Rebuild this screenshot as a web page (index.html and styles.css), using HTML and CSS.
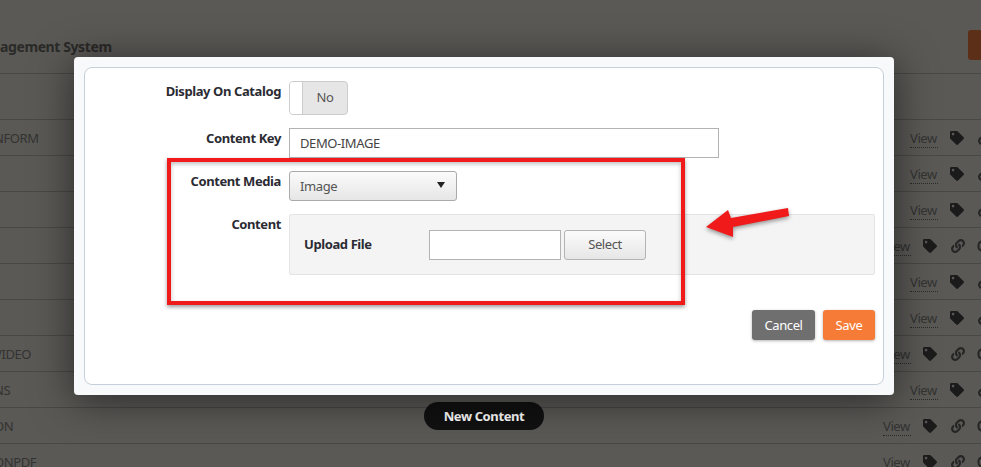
FILE: index.html
```html
<!DOCTYPE html>
<html lang="en">
<head>
  <meta charset="UTF-8">
  <meta name="viewport" content="width=device-width, initial-scale=1.0">
  <title>Content Management System</title>
  <link rel="stylesheet" href="styles.css">
</head>
<body>
  <svg class="icon-defs" width="0" height="0">
    <symbol id="tag" viewBox="0 0 512 512"><path d="M0 252.118V48C0 21.49 21.49 0 48 0h204.118a48 48 0 0 1 33.941 14.059l211.882 211.882c18.745 18.745 18.745 49.137 0 67.882L293.823 497.941c-18.745 18.745-49.137 18.745-67.882 0L14.059 286.059A48 48 0 0 1 0 252.118zM112 64c-26.51 0-48 21.49-48 48s21.49 48 48 48 48-21.49 48-48-21.49-48-48-48z"/></symbol>
    <symbol id="link" viewBox="0 0 512 512"><path d="M326.612 185.391c59.747 59.809 58.927 155.698.36 214.59-.11.12-.24.25-.36.37l-67.2 67.2c-59.27 59.27-155.699 59.262-214.96 0-59.27-59.26-59.27-155.7 0-214.96l37.106-37.106c9.84-9.84 26.786-3.3 27.294 10.606.648 17.722 3.826 35.527 9.69 52.721 1.986 5.822.567 12.262-3.783 16.612l-13.087 13.087c-28.026 28.026-28.905 73.66-1.155 101.96 28.024 28.579 74.086 28.749 102.325.51l67.2-67.19c28.191-28.191 28.073-73.757 0-101.83-3.701-3.694-7.429-6.564-10.341-8.569a16.037 16.037 0 0 1-6.947-12.606c-.396-10.567 3.348-21.456 11.698-29.806l21.054-21.055c5.521-5.521 14.182-6.199 20.584-1.731a152.482 152.482 0 0 1 20.522 17.197zM467.547 44.449c-59.261-59.262-155.69-59.27-214.96 0l-67.2 67.2c-.12.12-.25.25-.36.37-58.566 58.892-59.387 154.781.36 214.59a152.454 152.454 0 0 0 20.521 17.196c6.402 4.468 15.064 3.789 20.584-1.731l21.054-21.055c8.35-8.35 12.094-19.239 11.698-29.806a16.037 16.037 0 0 0-6.947-12.606c-2.912-2.005-6.64-4.875-10.341-8.569-28.073-28.073-28.191-73.639 0-101.83l67.2-67.19c28.239-28.239 74.3-28.069 102.325.51 27.75 28.3 26.872 73.934-1.155 101.96l-13.087 13.087c-4.35 4.35-5.769 10.79-3.783 16.612 5.864 17.194 9.042 34.999 9.69 52.721.509 13.906 17.454 20.446 27.294 10.606l37.106-37.106c59.271-59.259 59.271-155.699.001-214.959z"/></symbol>
    <symbol id="arc" viewBox="0 0 14 14"><path d="M6 2.2A5 5 0 0 0 6 11.8" fill="none" stroke="currentColor" stroke-width="2"/></symbol>
  </svg>

  <!-- Page behind the dialog -->
  <div class="page">
    <div class="page-head">
      <h1>agement System</h1>
      <span class="head-btn"></span>
    </div>
    <div class="table-head"></div>

    <div class="row"><span class="name">NFORM</span><div class="actions"><a>View</a><svg class="tag"><use href="#tag"/></svg><svg class="link"><use href="#link"/></svg></div></div>
    <div class="row"><span class="name"></span><div class="actions"><a>View</a><svg class="tag"><use href="#tag"/></svg><svg class="link"><use href="#link"/></svg></div></div>
    <div class="row"><span class="name"></span><div class="actions"><a>View</a><svg class="tag"><use href="#tag"/></svg><svg class="link"><use href="#link"/></svg></div></div>
    <div class="row"><span class="name"></span><div class="actions wide"><a>View</a><svg class="tag"><use href="#tag"/></svg><svg class="link"><use href="#link"/></svg><svg class="arc"><use href="#arc"/></svg></div></div>
    <div class="row"><span class="name"></span><div class="actions"><a>View</a><svg class="tag"><use href="#tag"/></svg><svg class="link"><use href="#link"/></svg></div></div>
    <div class="row"><span class="name"></span><div class="actions"><a>View</a><svg class="tag"><use href="#tag"/></svg><svg class="link"><use href="#link"/></svg></div></div>
    <div class="row"><span class="name">VIDEO</span><div class="actions wide"><a>View</a><svg class="tag"><use href="#tag"/></svg><svg class="link"><use href="#link"/></svg><svg class="arc"><use href="#arc"/></svg></div></div>
    <div class="row"><span class="name">NS</span><div class="actions"><a>View</a><svg class="tag"><use href="#tag"/></svg><svg class="link"><use href="#link"/></svg></div></div>
    <div class="row"><span class="name">ON</span><div class="actions wide"><a>View</a><svg class="tag"><use href="#tag"/></svg><svg class="link"><use href="#link"/></svg><svg class="arc"><use href="#arc"/></svg></div></div>
    <div class="row"><span class="name">ONPDF</span><div class="actions wide"><a>View</a><svg class="tag"><use href="#tag"/></svg><svg class="link"><use href="#link"/></svg><svg class="arc"><use href="#arc"/></svg></div></div>
  </div>

  <button class="new-content">New Content</button>

  <!-- Dialog -->
  <div class="modal">
    <div class="modal-panel">
      <div class="form-row row-toggle">
        <label>Display On Catalog</label>
        <div class="toggle"><span class="knob"></span><span class="toggle-text">No</span></div>
      </div>
      <div class="form-row row-key">
        <label>Content Key</label>
        <div class="text-input key-input">DEMO-IMAGE</div>
      </div>
      <div class="form-row row-media">
        <label>Content Media</label>
        <div class="select"><span>Image</span><span class="caret"></span></div>
      </div>
      <div class="form-row row-content">
        <label>Content</label>
        <div class="upload-box">
          <strong>Upload File</strong>
          <div class="text-input file-input"></div>
          <button class="select-btn">Select</button>
        </div>
      </div>
      <div class="modal-actions">
        <button class="btn btn-cancel">Cancel</button>
        <button class="btn btn-save">Save</button>
      </div>
    </div>
  </div>

  <!-- Screenshot annotations -->
  <div class="mark-box"></div>
  <svg class="mark-arrow" width="100" height="50" viewBox="700 200 100 50">
    <polygon points="706,227 728,210 731,218 788,208 789,216 733,227 733,237"/>
  </svg>
</body>
</html>
```

FILE: styles.css
```css
* {
  box-sizing: border-box;
}

html, body {
  height: 100%;
}

body {
  margin: 0;
  overflow: hidden;
  position: relative;
  background-color: #5a5956;
  font-family: 'Noto Sans', 'Lato', sans-serif;
  font-size: 13px;
  letter-spacing: -0.4px;
  color: #2b2b2b;
}

.icon-defs {
  position: absolute;
}

/* Page behind the dialog */
.page-head {
  height: 74px;
  padding-top: 30px;
  display: flex;
  justify-content: space-between;
  align-items: flex-start;
  border-bottom: 1px solid #484846;
}

.page-head h1 {
  margin: 7px 0 0;
  font-size: 14px;
  font-weight: bold;
  color: #2a2a28;
}

.head-btn {
  width: 13px;
  height: 30px;
  background-color: #5c3018;
  border-radius: 3px 0 0 3px;
}

.table-head {
  height: 46px;
  border-bottom: 1px solid #484846;
}

.row {
  height: 36px;
  display: flex;
  align-items: center;
  justify-content: space-between;
  border-bottom: 1px solid #484846;
  white-space: nowrap;
}

.name {
  margin-left: -6px;
  color: #333331;
}

.actions {
  width: 71px;
  flex-shrink: 0;
  display: flex;
  align-items: center;
}

.actions.wide {
  width: 98px;
}

.actions a {
  width: 28px;
  flex-shrink: 0;
  color: #333331;
  border-bottom: 1px dotted #2b2b2b;
  line-height: 18px;
  margin-top: 2px;
}

.tag {
  width: 14px;
  height: 14px;
  margin: 0 0 0 12px;
  fill: #1b1b1b;
  flex-shrink: 0;
}

.link {
  width: 14px;
  height: 14px;
  margin: 1px 0 0 14px;
  fill: #262626;
  flex-shrink: 0;
}

.arc {
  width: 14px;
  height: 14px;
  margin: 1px 0 0 11px;
  color: #262626;
  flex-shrink: 0;
}

.new-content {
  position: absolute;
  left: 424px;
  top: 402px;
  width: 120px;
  height: 28px;
  border: none;
  border-radius: 14px;
  background-color: #111;
  color: white;
  font-family: inherit;
  font-size: 13px;
  letter-spacing: inherit;
  font-weight: bold;
}

/* Dialog */
.modal {
  position: absolute;
  left: 74px;
  top: 57px;
  width: 820px;
  height: 338px;
  padding: 10px;
  background-color: #f8f9fa;
  border-radius: 4px;
  box-shadow: 0 5px 40px rgba(0, 0, 0, 0.55);
}

.modal-panel {
  height: 100%;
  background: white;
  border: 1px solid #c6d0dd;
  border-radius: 8px;
  padding: 13px 7px 0 0;
}

.form-row {
  display: flex;
  align-items: flex-start;
}

.form-row label {
  width: 196px;
  margin-right: 8px;
  text-align: right;
  font-weight: bold;
  color: #2b2b33;
  flex-shrink: 0;
  line-height: 20px;
}

.row-toggle {
  height: 47px;
}

.row-key {
  height: 43px;
}

.row-media {
  height: 43px;
}

.toggle {
  width: 59px;
  height: 34px;
  display: flex;
  background-color: #e6e6e6;
  border: 1px solid #ccc;
  border-radius: 4px;
  overflow: hidden;
}

.knob {
  width: 13px;
  background-color: white;
  border-right: 1px solid #ccc;
}

.toggle-text {
  flex: 1;
  text-align: center;
  line-height: 31px;
  color: #555;
}

.text-input {
  height: 30px;
  background-color: white;
  border: 1px solid #b3b3b3;
  line-height: 28px;
  color: #444;
}

.key-input {
  width: 430px;
  padding-left: 10px;
}

.select {
  width: 168px;
  height: 30px;
  padding: 0 10px;
  display: flex;
  align-items: center;
  justify-content: space-between;
  background: linear-gradient(#fbfbfb, #e6e6e6);
  border: 1px solid #aaa;
  border-radius: 3px;
  color: #555;
}

.caret {
  width: 0;
  height: 0;
  margin: -2px 1px 0 0;
  border-left: 4px solid transparent;
  border-right: 4px solid transparent;
  border-top: 6px solid #222;
}

.upload-box {
  width: 586px;
  height: 61px;
  padding: 0 14px;
  display: flex;
  align-items: center;
  background-color: #f4f4f4;
  border: 1px solid #e4e4e4;
  border-radius: 2px;
}

.upload-box strong {
  width: 125px;
  margin-top: -1px;
  color: #2b2b33;
}

.file-input {
  width: 132px;
}

.select-btn {
  width: 82px;
  height: 30px;
  margin-left: 3px;
  padding-bottom: 3px;
  background: linear-gradient(#fbfbfb, #e6e6e6);
  border: 1px solid #b3b3b3;
  border-radius: 3px;
  font-family: inherit;
  font-size: 13px;
  letter-spacing: inherit;
  color: #555;
}

.modal-actions {
  margin-top: 35px;
  margin-right: 1px;
  display: flex;
  justify-content: flex-end;
  gap: 8px;
}

.btn {
  height: 30px;
  border: none;
  border-radius: 3px;
  color: white;
  font-family: inherit;
  font-size: 13px;
  letter-spacing: inherit;
  box-shadow: 0 1px 3px rgba(0, 0, 0, 0.3);
}

.btn-cancel {
  width: 63px;
  background-color: #6f6f6f;
}

.btn-save {
  width: 52px;
  background-color: #f67b36;
}

/* Screenshot annotations */
.mark-box {
  position: absolute;
  left: 167px;
  top: 158px;
  width: 518px;
  height: 147px;
  border: 4px solid #f01a1a;
  box-shadow: 0 2px 4px rgba(0, 0, 0, 0.4), inset 0 2px 4px rgba(0, 0, 0, 0.25);
}

.mark-arrow {
  position: absolute;
  left: 700px;
  top: 200px;
  fill: #f01a1a;
  filter: drop-shadow(0 2px 2px rgba(0, 0, 0, 0.4));
}
```
